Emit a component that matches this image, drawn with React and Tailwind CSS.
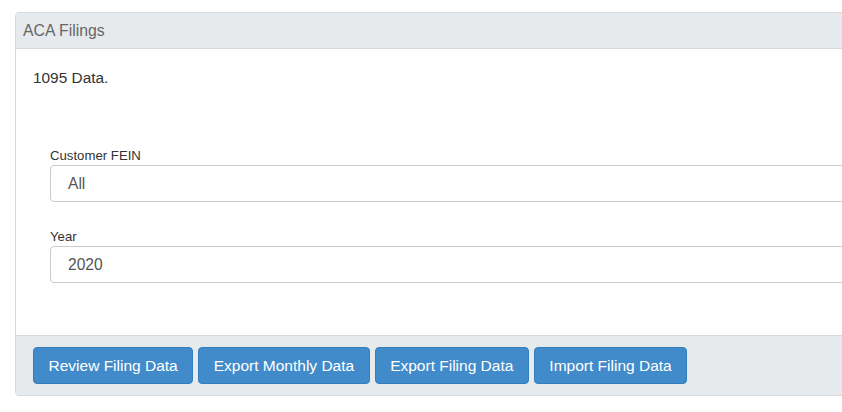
export default function App() {
  const buttons = ['Review Filing Data', 'Export Monthly Data', 'Export Filing Data', 'Import Filing Data'];

  return (
    <div className="w-screen h-[412px] overflow-hidden bg-white font-['Liberation_Sans',Arial,sans-serif]">
      <div className="pt-[12px] pl-[15px]">
        <div className="w-[900px] border border-[#d6dadd] rounded-[4px] bg-white">
          {/* Header */}
          <div className="h-[36px] bg-[#e6eaed] border-b border-[#d6dadd] rounded-t-[4px] px-[7px] flex items-center text-[15.8px] text-[#666]">
            ACA Filings
          </div>

          {/* Body */}
          <div className="pl-[17px] pt-[18px] pb-[52px]">
            <p className="text-[15.4px] leading-[22px] text-[#333]">1095 Data.</p>

            <div className="pl-[17px] pt-[57px]">
              <label className="block text-[13.2px] leading-[19px] text-[#333]">Customer FEIN</label>
              <div className="h-[37px] border border-[#ccc] rounded-[4px] flex items-center pl-[17px] text-[15.6px] text-[#555]">
                All
              </div>

              <label className="block text-[13.2px] leading-[19px] text-[#333] mt-[25px]">Year</label>
              <div className="h-[37px] border border-[#ccc] rounded-[4px] flex items-center pl-[17px] text-[15.6px] text-[#555]">
                2020
              </div>
            </div>
          </div>

          {/* Footer */}
          <div className="bg-[#e6eaed] border-t border-[#d6dadd] rounded-b-[4px] pl-[17px] pt-[11px] pb-[11px] flex gap-[5px]">
            {buttons.map((b) => (
              <button
                key={b}
                className="h-[37px] px-[14.5px] bg-[#428bca] border border-[#357ebd] rounded-[4px] text-white text-[15.5px]"
              >
                {b}
              </button>
            ))}
          </div>
        </div>
      </div>
    </div>
  );
}
